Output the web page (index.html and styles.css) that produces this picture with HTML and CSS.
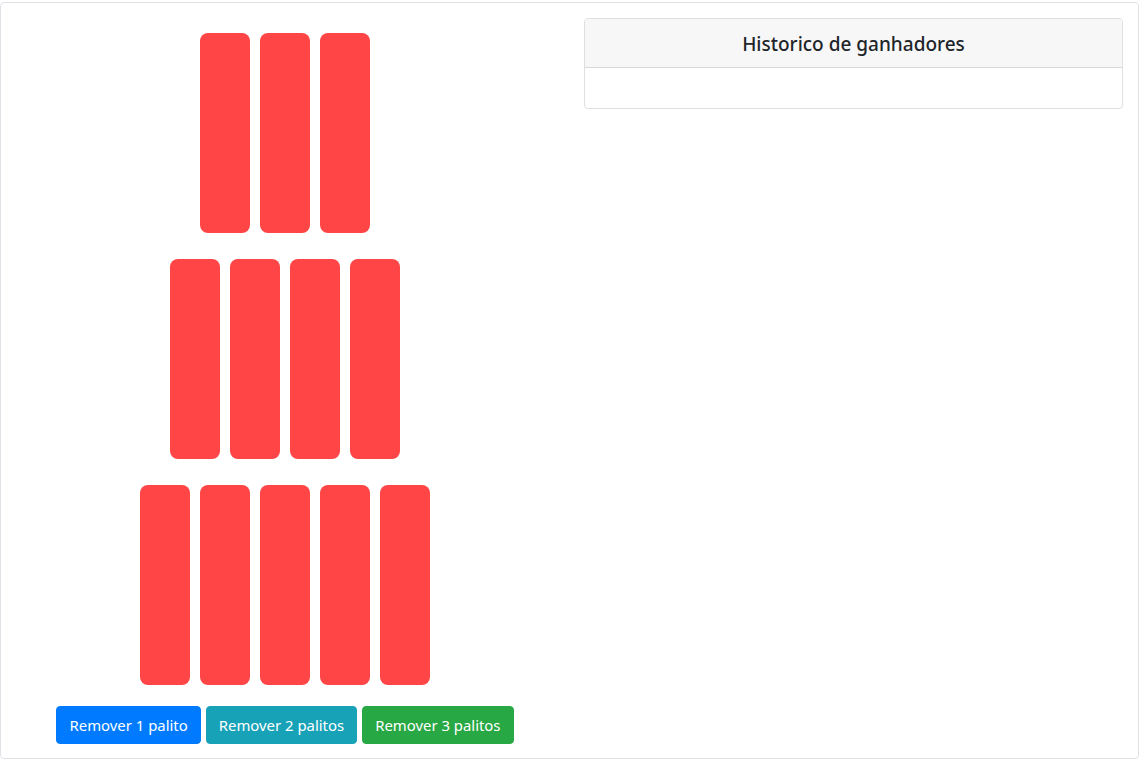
FILE: index.html
```html
<!DOCTYPE html>
<html lang="pt">
<head>
<meta charset="utf-8">
<title>Jogo dos palitos</title>
<link rel="stylesheet" href="styles.css">
</head>
<body>
<div class="frame">
  <div class="game">
    <div class="row">
      <div class="stick"></div><div class="stick"></div><div class="stick"></div>
    </div>
    <div class="row">
      <div class="stick"></div><div class="stick"></div><div class="stick"></div><div class="stick"></div>
    </div>
    <div class="row">
      <div class="stick"></div><div class="stick"></div><div class="stick"></div><div class="stick"></div><div class="stick"></div>
    </div>
    <div class="actions">
      <button class="btn btn-blue">Remover 1 palito</button>
      <button class="btn btn-teal">Remover 2 palitos</button>
      <button class="btn btn-green">Remover 3 palitos</button>
    </div>
  </div>
  <div class="side">
    <div class="card">
      <div class="card-header">Historico de ganhadores</div>
      <div class="card-body"></div>
    </div>
  </div>
</div>
</body>
</html>
```
FILE: styles.css
```css
html, body {
  margin: 0;
  padding: 0;
  background: #fff;
}
body {
  font-family: "Noto Sans", "Liberation Sans", sans-serif;
  color: #212529;
  padding-top: 2px;
}
.frame {
  box-sizing: border-box;
  width: 1139px;
  height: 757px;
  border: 1px solid #dee2e6;
  border-radius: 4px;
  display: grid;
  grid-template-columns: 568px 539px;
  column-gap: 15px;
  padding: 15px 15px 0 0;
}
.game {
  display: flex;
  flex-direction: column;
  align-items: center;
  padding-top: 15px;
  gap: 26px;
}
.row {
  display: flex;
  gap: 10px;
}
.stick {
  width: 50px;
  height: 200px;
  background: #ff4545;
  border-radius: 8px;
}
.actions {
  display: flex;
  gap: 5px;
  margin-top: -5px;
}
.btn {
  font-family: inherit;
  font-size: 14.9px;
  line-height: 24px;
  padding: 6px 12px;
  border: 1px solid transparent;
  border-radius: 4px;
  color: #fff;
  cursor: pointer;
}
.btn-blue { background: #007bff; border-color: #007bff; }
.btn-teal { background: #17a2b8; border-color: #17a2b8; }
.btn-green { background: #28a745; border-color: #28a745; }
.side {
  align-self: start;
}
.card {
  border: 1px solid rgba(0,0,0,.125);
  border-radius: 4px;
  overflow: hidden;
}
.card-header {
  background: #f7f7f7;
  border-bottom: 1px solid rgba(0,0,0,.125);
  padding: 13px 20px 11px;
  text-align: center;
  font-size: 19px;
  font-weight: 500;
  line-height: 24px;
}
.card-body {
  height: 40px;
}
```
